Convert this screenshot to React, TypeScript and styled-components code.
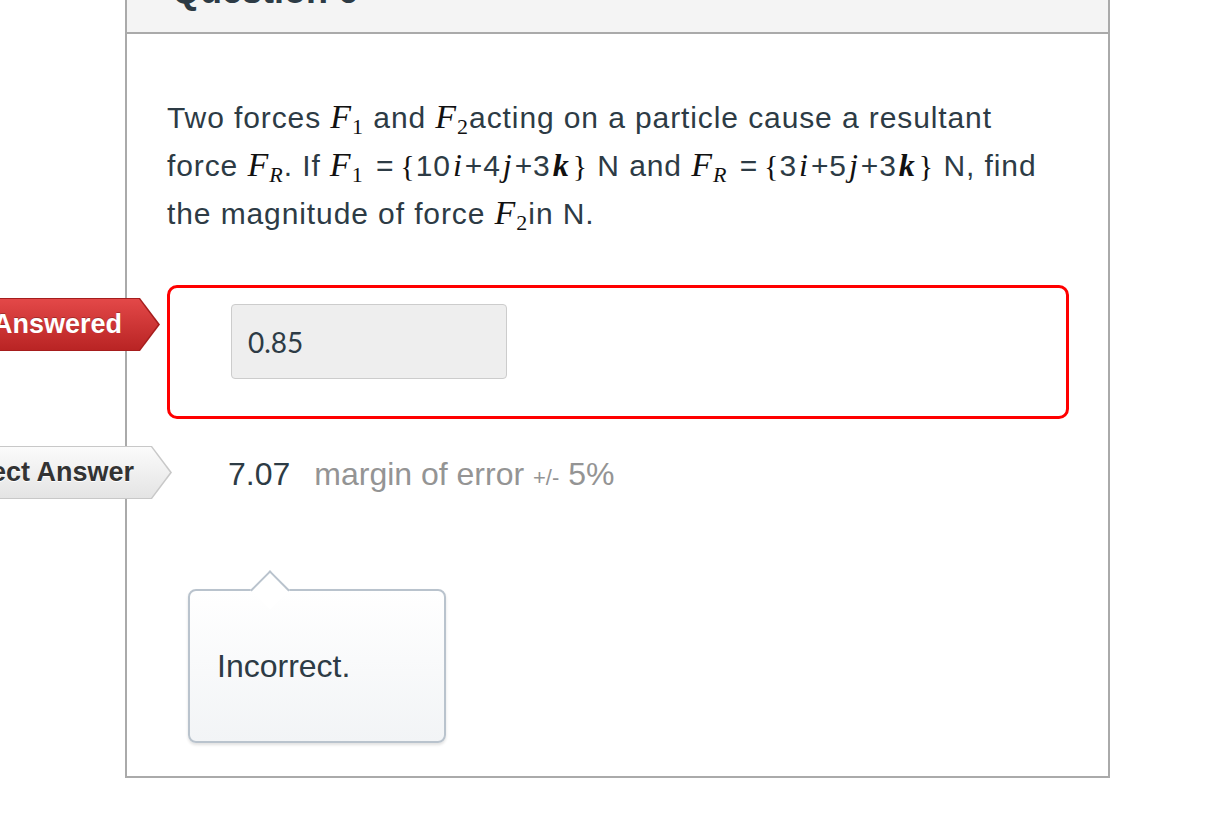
import styled, { createGlobalStyle } from "styled-components";

const GlobalStyle = createGlobalStyle`
  html, body {
    margin: 0;
    padding: 0;
    background: #ffffff;
    overflow: hidden;
  }
  body {
    font-family: "Liberation Sans", Arial, sans-serif;
    color: #2d3b45;
  }
`;

function Vec({ name, sub, italicSub }: { name: string; sub: string; italicSub?: boolean }) {
  return (
    <Var>
      {name}
      <Sub $italic={italicSub}>{sub}</Sub>
    </Var>
  );
}

function App() {
  return (
    <>
      <GlobalStyle />
      <Card>
        <Header>Question 6</Header>
        <Body>
          <Prompt>
            Two forces <Vec name="F" sub="1" /> and <Vec name="F" sub="2" />acting on a particle cause a
            resultant
            <br />
            force <Vec name="F" sub="R" italicSub />. If <Vec name="F" sub="1" /> <Eq>=</Eq>
            <Brace>{"{"}</Brace>10<Letter>i</Letter>+4<Letter>j</Letter>+3<Letter $bold>k</Letter>
            <Brace>{"}"}</Brace> N and <Vec name="F" sub="R" italicSub /> <Eq>=</Eq>
            <Brace>{"{"}</Brace>3<Letter>i</Letter>+5<Letter>j</Letter>+3<Letter $bold>k</Letter>
            <Brace>{"}"}</Brace> N, find
            <br />
            the magnitude of force <Vec name="F" sub="2" />in N.
          </Prompt>

          <AnswerBox>
            <Tag $variant="wrong" style={{ top: 10, left: -270 }}>
              <TagFill $variant="wrong">Answered</TagFill>
            </Tag>
            <AnswerInput value="0.85" readOnly />
          </AnswerBox>

          <CorrectRow>
            <Tag $variant="correct" style={{ top: 0, left: -255 }}>
              <TagFill $variant="correct">Correct Answer</TagFill>
            </Tag>
            <CorrectValue>7.07</CorrectValue>
            <Margin>
              margin of error <Small>+/-</Small> 5%
            </Margin>
          </CorrectRow>

          <Feedback>Incorrect.</Feedback>
        </Body>
      </Card>
    </>
  );
}

export default App;

const Card = styled.div`
  margin: -42px 0 0 125px;
  width: 985px;
  box-sizing: border-box;
  border: 2px solid #aaaaaa;
  background: #ffffff;
`;

const Header = styled.div`
  height: 74px;
  box-sizing: border-box;
  padding: 13px 0 0 45px;
  background: #f4f4f4;
  border-bottom: 2px solid #aaaaaa;
  font-size: 36px;
  line-height: 36px;
  font-weight: bold;
  color: #2d3b45;
`;

const Body = styled.div`
  padding: 60px 39px 33px 40px;
`;

const Prompt = styled.p`
  margin: 0;
  font-size: 30px;
  line-height: 48px;
  letter-spacing: 0.9px;
  white-space: nowrap;
  color: #2d3b45;
`;

const Var = styled.span`
  font-family: "Liberation Serif", "DejaVu Serif", serif;
  font-style: italic;
  font-size: 34px;
  line-height: 1;
  letter-spacing: 0;
  color: #111;
  margin-right: 1px;
`;

const Sub = styled.span<{ $italic?: boolean }>`
  font-size: 22px;
  font-style: ${(p) => (p.$italic ? "italic" : "normal")};
  position: relative;
  top: 6px;
  margin-left: 1px;
`;

const Letter = styled.span<{ $bold?: boolean }>`
  font-family: "Liberation Serif", "DejaVu Serif", serif;
  font-style: italic;
  font-weight: ${(p) => (p.$bold ? "bold" : "normal")};
  font-size: 32px;
  line-height: 1;
  letter-spacing: 0;
  color: #111;
  margin: 0 3px 0 2px;
`;

const Brace = styled.span`
  font-family: "Liberation Serif", "DejaVu Serif", serif;
  font-size: 30px;
  line-height: 1;
  letter-spacing: 0;
  color: #111;
  margin: 0 1px;
`;

const Eq = styled.span`
  margin: 0 5px 0 3px;
`;

const AnswerBox = styled.div`
  position: relative;
  margin-top: 47px;
  border: 3px solid #ff0000;
  border-radius: 10px;
  padding: 16px 0 37px 61px;
`;

const AnswerInput = styled.input`
  display: block;
  width: 276px;
  height: 75px;
  box-sizing: border-box;
  padding: 0 16px;
  background: #eeeeee;
  border: 1px solid #cccccc;
  border-radius: 4px;
  font-family: Lato, "Liberation Sans", sans-serif;
  font-size: 28px;
  color: #2d3b45;
  outline: none;
`;

const Tag = styled.div<{ $variant: "wrong" | "correct" }>`
  position: absolute;
  width: 260px;
  height: 53px;
  background: ${(p) => (p.$variant === "wrong" ? "#a61d1d" : "#c8c8c8")};
  clip-path: polygon(0 0, 240px 0, 260px 50%, 240px 100%, 0 100%);
`;

const TagFill = styled.div<{ $variant: "wrong" | "correct" }>`
  position: absolute;
  inset: 1px 0 1px 0;
  display: flex;
  align-items: center;
  justify-content: flex-end;
  padding-right: 38px;
  clip-path: polygon(0 0, 239px 0, 258px 50%, 239px 100%, 0 100%);
  background: ${(p) =>
    p.$variant === "wrong"
      ? "linear-gradient(#e34848, #b92424)"
      : "linear-gradient(#fbfbfb, #e4e4e4)"};
  color: ${(p) => (p.$variant === "wrong" ? "#ffffff" : "#333333")};
  font-size: 27px;
  font-weight: bold;
  text-shadow: ${(p) =>
    p.$variant === "wrong" ? "0 -1px 0 rgba(0,0,0,0.25)" : "0 1px 0 #ffffff"};
`;

const CorrectRow = styled.div`
  position: relative;
  margin-top: 27px;
  height: 53px;
  box-sizing: border-box;
  padding: 3px 0 0 61px;
  display: flex;
  align-items: center;
  gap: 24px;
  font-size: 32px;
`;

const CorrectValue = styled.span`
  color: #2d3b45;
`;

const Margin = styled.span`
  color: #949494;
`;

const Small = styled.span`
  font-size: 22px;
`;

const Feedback = styled.div`
  position: relative;
  margin: 90px 0 0 21px;
  width: 258px;
  height: 154px;
  box-sizing: border-box;
  display: flex;
  align-items: center;
  padding-left: 27px;
  border: 2px solid #b9c3cd;
  border-radius: 8px;
  background: linear-gradient(#ffffff, #f2f4f6);
  box-shadow: 0 2px 3px rgba(0, 0, 0, 0.12);
  font-size: 32px;
  color: #2d3b45;

  &::before {
    content: "";
    position: absolute;
    top: -15px;
    left: 66px;
    width: 26px;
    height: 26px;
    background: #ffffff;
    border-top: 2px solid #b9c3cd;
    border-left: 2px solid #b9c3cd;
    transform: rotate(45deg);
  }
`;
